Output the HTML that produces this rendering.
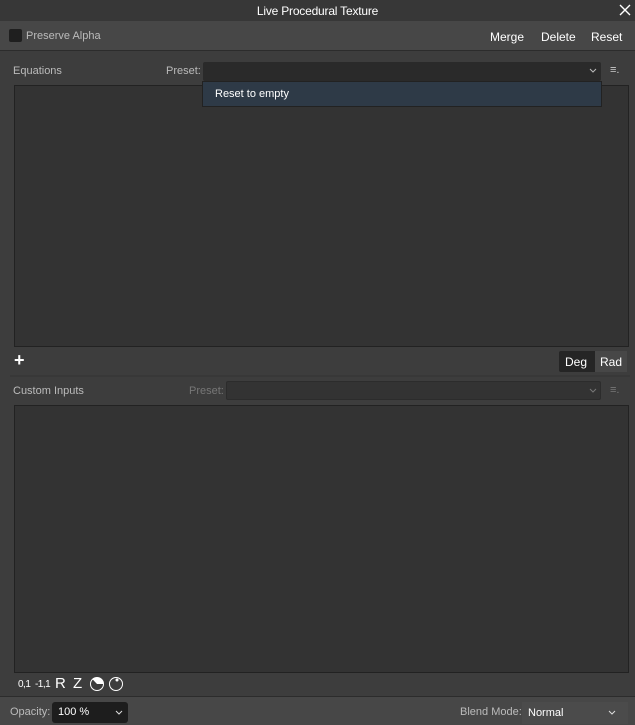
<!DOCTYPE html>
<html><head><style>
*{margin:0;padding:0;box-sizing:border-box}
body{width:635px;height:725px;background:#3d3d3d;font-family:"Liberation Sans",sans-serif;font-size:12px;color:#ddd;position:relative;overflow:hidden}
.a{position:absolute}
.t{white-space:nowrap}
</style></head><body>
<div class="a" style="left:0;top:0;width:635px;height:21px;background:#373737"></div>
<div class="a t" style="left:0;top:4px;width:635px;text-align:center;color:#fff;font-size:12px;letter-spacing:-0.2px">Live Procedural Texture</div>
<svg class="a" style="left:619px;top:4px" width="12" height="12"><path d="M1 1L11 11M11 1L1 11" stroke="#fff" stroke-width="1.4"/></svg>
<div class="a" style="left:0;top:21px;width:635px;height:30px;background:#474747;border-bottom:1px solid #2c2c2c"></div>
<div class="a" style="left:9px;top:29px;width:13px;height:13px;background:#1f1f1f;border-radius:2px"></div>
<div class="a t" style="left:26px;top:30px;color:#bbb;font-size:11px">Preserve Alpha</div>
<div class="a t" style="left:490px;top:30px;color:#fff">Merge</div>
<div class="a t" style="left:541px;top:30px;color:#fff">Delete</div>
<div class="a t" style="left:591px;top:30px;color:#fff">Reset</div>

<div class="a t" style="left:13px;top:65px;color:#bbb;font-size:11px">Equations</div>
<div class="a t" style="left:166px;top:65px;color:#bbb;font-size:11px">Preset:</div>
<div class="a" style="left:203px;top:62px;width:398px;height:19px;background:#2a2a2a;border-radius:2px"></div>
<svg class="a" style="left:589px;top:68px" width="8" height="6"><path d="M1 1L4 4L7 1" stroke="#bbb" fill="none"/></svg>
<div class="a t" style="left:610px;top:64px;color:#ccc;font-size:11px">≡.</div>
<div class="a" style="left:14px;top:85px;width:615px;height:262px;background:#333;border:1px solid #222"></div>
<div class="a" style="left:202px;top:81px;width:400px;height:26px;background:#2e3a47;border:1px solid #222"></div>
<div class="a t" style="left:215px;top:88px;color:#fff;font-size:11px">Reset to empty</div>

<div class="a t" style="left:14px;top:350px;color:#fff;font-size:18px;font-weight:bold">+</div>
<div class="a" style="left:559px;top:351px;width:36px;height:21px;background:#252525;border-radius:2px 0 0 2px"></div>
<div class="a" style="left:595px;top:351px;width:32px;height:21px;background:#474747"></div>
<div class="a t" style="left:565px;top:355px;color:#fff">Deg</div>
<div class="a t" style="left:600px;top:355px;color:#fff">Rad</div>
<div class="a" style="left:10px;top:375px;width:620px;height:2px;background:#383838"></div>

<div class="a t" style="left:13px;top:385px;color:#bbb;font-size:11px">Custom Inputs</div>
<div class="a t" style="left:189px;top:385px;color:#777;font-size:11px">Preset:</div>
<div class="a" style="left:226px;top:381px;width:375px;height:19px;background:#333;border-radius:2px;border:1px solid #2c2c2c"></div>
<svg class="a" style="left:589px;top:388px" width="8" height="6"><path d="M1 1L4 4L7 1" stroke="#777" fill="none"/></svg>
<div class="a t" style="left:610px;top:384px;color:#777;font-size:11px">≡.</div>
<div class="a" style="left:14px;top:405px;width:615px;height:268px;background:#333;border:1px solid #222"></div>

<div class="a t" style="left:18px;top:679px;color:#fff;font-size:10px;letter-spacing:-0.5px">0,1 &nbsp;-1,1</div>
<div class="a t" style="left:55px;top:675px;color:#fff;font-size:15px">R</div>
<div class="a t" style="left:73px;top:675px;color:#fff;font-size:15px">Z</div>
<svg class="a" style="left:89px;top:676px" width="36" height="16"><circle cx="8" cy="8" r="6.5" fill="none" stroke="#fff"/><path d="M8 8L3.5 3.3A6.5 6.5 0 0 1 14.5 8Z" fill="#fff"/><circle cx="27" cy="8" r="6.5" fill="none" stroke="#fff"/><circle cx="28" cy="4" r="1.5" fill="#fff"/></svg>

<div class="a" style="left:0;top:696px;width:635px;height:29px;background:#474747;border-top:1px solid #2c2c2c"></div>
<div class="a t" style="left:10px;top:706px;color:#bbb;font-size:11px">Opacity:</div>
<div class="a" style="left:52px;top:702px;width:76px;height:21px;background:#1d1d1d;border-radius:3px"></div>
<div class="a t" style="left:58px;top:706px;color:#fff;font-size:11px">100 %</div>
<svg class="a" style="left:115px;top:710px" width="8" height="6"><path d="M1 1L4 4L7 1" stroke="#ddd" fill="none"/></svg>
<div class="a t" style="left:460px;top:706px;color:#bbb;font-size:11px">Blend Mode:</div>
<div class="a" style="left:522px;top:702px;width:106px;height:22px;background:#4b4b4b"></div>
<div class="a t" style="left:528px;top:707px;color:#fff;font-size:11px">Normal</div>
<svg class="a" style="left:608px;top:710px" width="8" height="6"><path d="M1 1L4 4L7 1" stroke="#ddd" fill="none"/></svg>
</body></html>
